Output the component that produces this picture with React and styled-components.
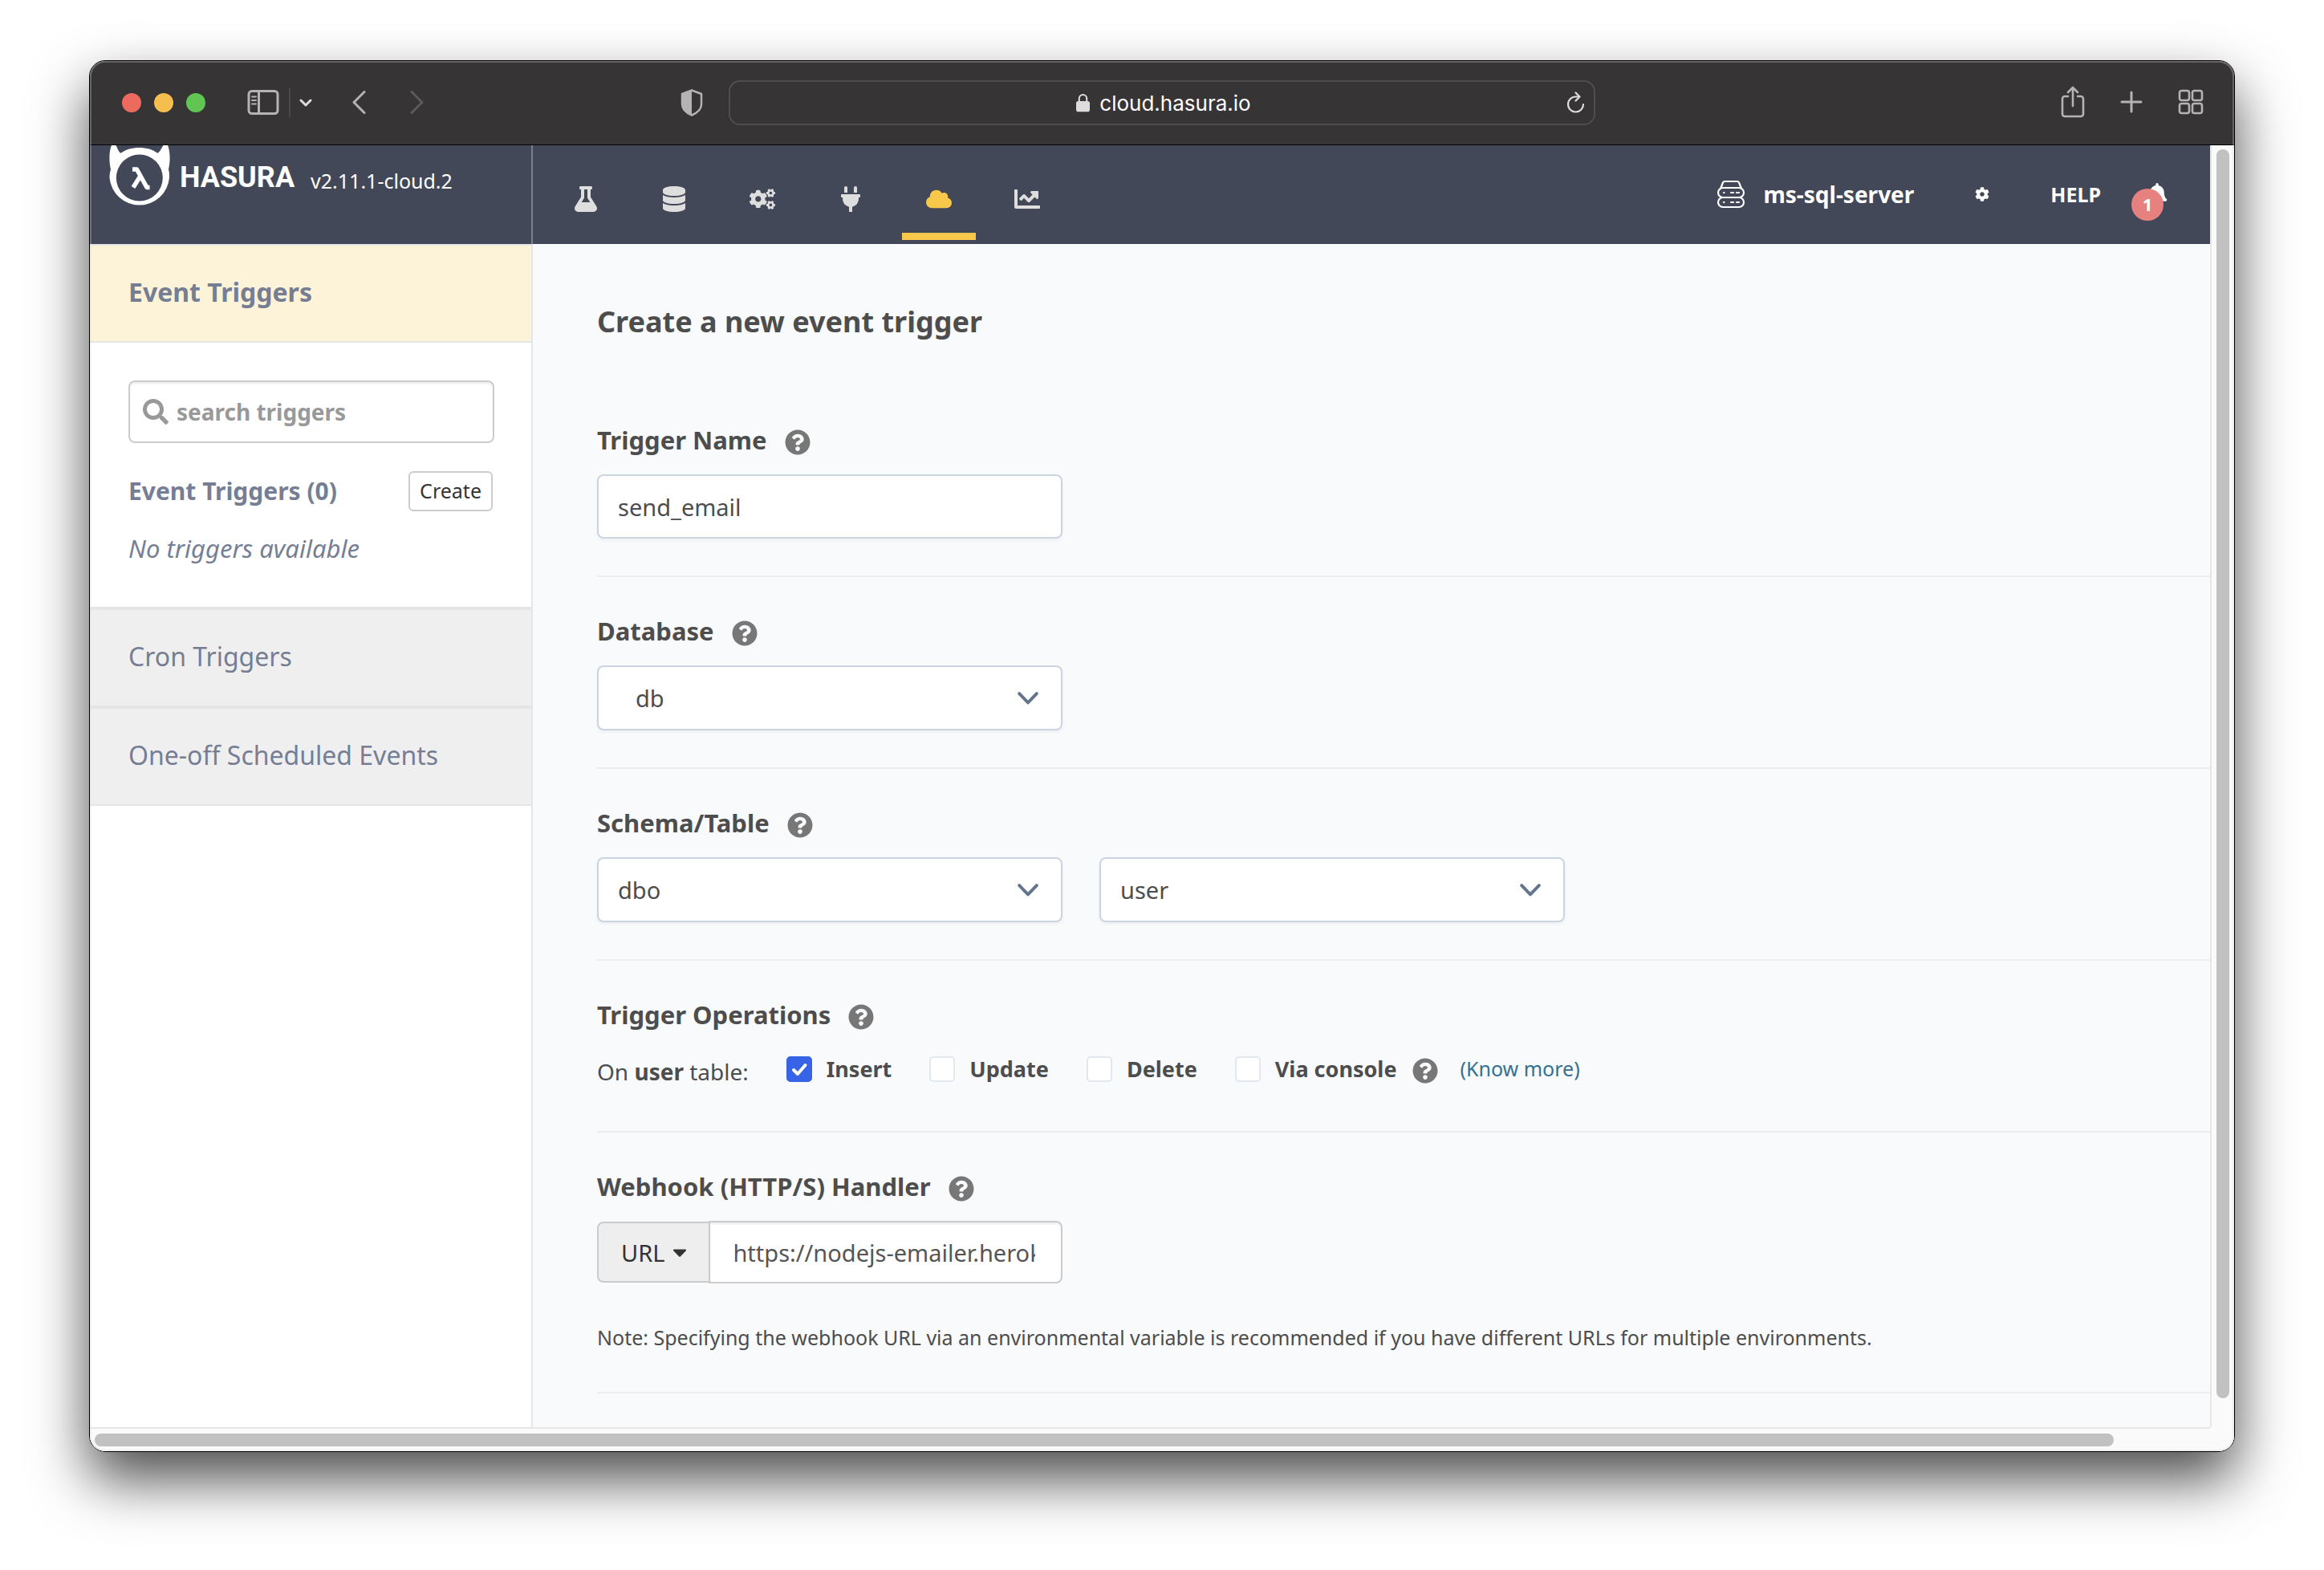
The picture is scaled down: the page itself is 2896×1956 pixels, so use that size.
import { useState } from "react";
import styled, { createGlobalStyle } from "styled-components";
import {
  FaFlask, FaDatabase, FaCogs, FaPlug, FaCloud, FaChartLine,
  FaCog, FaBell, FaSearch, FaQuestionCircle, FaCaretDown,
} from "react-icons/fa";

const navItems = [
  { name: "API", icon: FaFlask },
  { name: "Data", icon: FaDatabase },
  { name: "Actions", icon: FaCogs },
  { name: "Remote Schemas", icon: FaPlug },
  { name: "Events", icon: FaCloud, active: true },
  { name: "Monitoring", icon: FaChartLine },
];

const operationNames = ["Insert", "Update", "Delete", "Via console"];

function HelpIcon() {
  return (
    <Help type="button" aria-label="Help">
      <FaQuestionCircle size={32} />
    </Help>
  );
}

function Dropdown({ id, label, options, indent }) {
  return (
    <SelectBox>
      <Select id={id} aria-label={label} $indent={indent}>
        {options.map((o) => <option key={o}>{o}</option>)}
      </Select>
      <Chevron viewBox="0 0 24 24" fill="none" stroke="#64748b" strokeWidth="3.600" strokeLinecap="round" strokeLinejoin="round">
        <path d="M2 6.500 L12 17 L22 6.500" />
      </Chevron>
    </SelectBox>
  );
}

function TitleBar() {
  return (
    <Bar>
      <BarLeft>
        <Lights>
          <Light $color="#ed6a5e" aria-label="Close" />
          <Light $color="#f5bf4f" aria-label="Minimize" />
          <Light $color="#61c554" aria-label="Zoom" />
        </Lights>
        <BarButton aria-label="Sidebar">
          <svg width="40" height="32" viewBox="0 0 40 32" fill="none" stroke="#b5b3b4" strokeWidth="3">
            <rect x="2" y="1.500" width="36" height="28" rx="4" />
            <path d="M14.500 2V29" />
            <path d="M6 8.500h5M6 13h5M6 17.500h5" strokeWidth="2" strokeLinecap="round" />
          </svg>
        </BarButton>
        <BarDivider />
        <BarButton aria-label="Tab groups">
          <svg width="16" height="12" viewBox="0 0 16 12" fill="none" stroke="#dedddd" strokeWidth="3" strokeLinecap="round" strokeLinejoin="round">
            <path d="M2 3l6 6 6-6" />
          </svg>
        </BarButton>
        <Arrows>
          <BarButton aria-label="Back">
            <svg width="18" height="30" viewBox="0 0 18 30" fill="none" stroke="#b5b3b4" strokeWidth="3" strokeLinecap="round" strokeLinejoin="round">
              <path d="M15 1.500L2 14.500l13 13" />
            </svg>
          </BarButton>
          <BarButton aria-label="Forward">
            <svg width="18" height="30" viewBox="0 0 18 30" fill="none" stroke="#5c5a5b" strokeWidth="3" strokeLinecap="round" strokeLinejoin="round">
              <path d="M2 1.500l13 13-13 13" />
            </svg>
          </BarButton>
        </Arrows>
        <ShieldButton aria-label="Privacy report">
          <svg width="28" height="34" viewBox="0 0 28 34">
            <path d="M14 1.500L26 6v13c0 6-5 10.500-12 13.500C7 29.500 2 25 2 19V6z" fill="none" stroke="#b5b3b4" strokeWidth="2.500" strokeLinejoin="round" />
            <path d="M14 1.500V32.500C7 29.500 2 25 2 19V6z" fill="#b5b3b4" />
          </svg>
        </ShieldButton>
      </BarLeft>
      <Address>
        <span />
        <AddressText>
          <svg width="17" height="24" viewBox="0 0 18 24">
            <rect x="0" y="10" width="18" height="14" rx="3" fill="#dedddd" />
            <path d="M4 11V6.500a5 5 0 0 1 10 0V11" fill="none" stroke="#dedddd" strokeWidth="2.200" />
          </svg>
          cloud.hasura.io
        </AddressText>
        <BarButton aria-label="Reload">
          <svg width="24" height="28" viewBox="0 0 24 28" fill="none" stroke="#dedddd" strokeWidth="2.200" strokeLinecap="round" strokeLinejoin="round">
            <path d="M21 16a9.500 9.500 0 1 1-9.500-9.500h4" />
            <path d="M11.500 1.500l5 5-5 5" />
          </svg>
        </BarButton>
      </Address>
      <BarRight>
        <BarButton aria-label="Share">
          <svg width="30" height="40" viewBox="0 0 30 40" fill="none" stroke="#b5b3b4" strokeWidth="2.600" strokeLinecap="round" strokeLinejoin="round">
            <path d="M9 13H5a3 3 0 0 0-3 3v19a3 3 0 0 0 3 3h20a3 3 0 0 0 3-3V16a3 3 0 0 0-3-3h-4" />
            <path d="M15 25V2M9 8l6-6 6 6" />
          </svg>
        </BarButton>
        <BarButton aria-label="New tab">
          <svg width="28" height="28" viewBox="0 0 28 28" fill="none" stroke="#b5b3b4" strokeWidth="3" strokeLinecap="round">
            <path d="M14 2v24M2 14h24" />
          </svg>
        </BarButton>
        <BarButton aria-label="Tab overview">
          <svg width="32" height="32" viewBox="0 0 32 32" fill="none" stroke="#b5b3b4" strokeWidth="2.600">
            <rect x="2" y="2" width="12" height="12" rx="2.500" />
            <rect x="18" y="2" width="12" height="12" rx="2.500" />
            <rect x="2" y="18" width="12" height="12" rx="2.500" />
            <rect x="18" y="18" width="12" height="12" rx="2.500" />
          </svg>
        </BarButton>
      </BarRight>
    </Bar>
  );
}

function Header() {
  return (
    <Top>
      <Brand>
        <svg width="76" height="78" viewBox="0 0 76 78">
          <path
            fill="#fff"
            d="M3 0H8.500C10.500 4 12 8.500 14.500 9.800C21 5 29 3 37.500 3C46 3 54 5 60.500 9.800C63 8.500 65 4 67.500 0H73C76 7 76.500 20 74 30C75 33 75 37 75 40.500A37.400 37.400 0 0 1 .500 40.500C.500 37 1 33 2 30C-.500 20 0 7 3 0Z"
          />
          <circle cx="37.800" cy="40.500" r="29" fill="#434858" />
          <path
            fill="none"
            stroke="#fff"
            strokeWidth="5.500"
            strokeLinejoin="round"
            d="M29 30h5.500L47 52.500h3.500M38.500 39L30 52.500"
          />
        </svg>
        <BrandName>HASURA</BrandName>
        <Version>v2.11.1-cloud.2</Version>
      </Brand>
      <Nav>
        {navItems.map(({ name, icon: Icon, active }) => (
          <NavLink key={name} href="#" aria-label={name} $active={active}>
            <Icon size={32} />
          </NavLink>
        ))}
      </Nav>
      <Tools>
        <Project href="#">
          <svg width="36" height="36" viewBox="0 0 36 36" fill="none" stroke="#fff" strokeWidth="2.200" strokeLinejoin="round" strokeLinecap="round">
            <rect x="2" y="10" width="32" height="12" rx="6" />
            <rect x="2" y="22" width="32" height="12" rx="6" />
            <path d="M5 11l3-7.500c.500-1 1-1.500 2-1.500h16c1 0 1.500.500 2 1.500L31 11" />
            <path d="M9 16h.500M18 16h3M25 16h3M9 28h.500M18 28h3M25 28h3" />
          </svg>
          ms-sql-server
        </Project>
        <IconButton aria-label="Settings"><FaCog size={18} /></IconButton>
        <HelpLink href="#">HELP</HelpLink>
        <BellButton aria-label="Notifications">
          <FaBell size={28} />
          <Badge>1</Badge>
        </BellButton>
      </Tools>
    </Top>
  );
}

export default function App() {
  const [checked, setChecked] = useState({ Insert: true });
  const [triggerName, setTriggerName] = useState("send_email");
  const [url, setUrl] = useState("https://nodejs-emailer.herokuapp.com");

  const toggle = (name) => setChecked((prev) => ({ ...prev, [name]: !prev[name] }));

  return (
    <Desktop>
      <GlobalStyle />
      <Window>
        <TitleBar />
        <Viewport>
          <Page>
            <Header />
            <Body>
              <Sidebar>
                <SideItem href="#" $active>Event Triggers</SideItem>
                <SideBody>
                  <SearchBox>
                    <FaSearch size={32} />
                    <input type="text" aria-label="search triggers" placeholder="search triggers" />
                  </SearchBox>
                  <SideRow>
                    <SideCount>Event Triggers (0)</SideCount>
                    <CreateButton>Create</CreateButton>
                  </SideRow>
                  <Empty>No triggers available</Empty>
                </SideBody>
                <SideItem href="#">Cron Triggers</SideItem>
                <SideItem href="#">One-off Scheduled Events</SideItem>
              </Sidebar>

              <Main>
                <Title>Create a new event trigger</Title>

                <Section>
                  <Heading><label htmlFor="name">Trigger Name</label><HelpIcon /></Heading>
                  <TextInput id="name" value={triggerName} onChange={(e) => setTriggerName(e.target.value)} />
                </Section>

                <Section>
                  <Heading><label htmlFor="db">Database</label><HelpIcon /></Heading>
                  <Dropdown id="db" label="Database" options={["db"]} indent />
                </Section>

                <Section>
                  <Heading><label htmlFor="schema">Schema/Table</label><HelpIcon /></Heading>
                  <Fields>
                    <Dropdown id="schema" label="Schema" options={["dbo"]} />
                    <Dropdown id="table" label="Table" options={["user"]} />
                  </Fields>
                </Section>

                <Section>
                  <Heading>Trigger Operations<HelpIcon /></Heading>
                  <Operations>
                    <span>On <b>user</b> table:</span>
                    {operationNames.map((name) => (
                      <Check key={name}>
                        <Tick>
                          <input type="checkbox" checked={!!checked[name]} onChange={() => toggle(name)} />
                          <svg viewBox="0 0 32 32" fill="none" stroke="#fff" strokeWidth="4" strokeLinecap="round" strokeLinejoin="round">
                            <path d="M9 17l5 5 9.500-11" />
                          </svg>
                        </Tick>
                        {name}
                      </Check>
                    ))}
                    <Extra>
                      <HelpIcon />
                      <KnowMore href="#">(Know more)</KnowMore>
                    </Extra>
                  </Operations>
                </Section>

                <Section>
                  <Heading><label htmlFor="url">Webhook (HTTP/S) Handler</label><HelpIcon /></Heading>
                  <UrlGroup>
                    <UrlButton>URL <FaCaretDown size={28} /></UrlButton>
                    <UrlInput id="url" value={url} onChange={(e) => setUrl(e.target.value)} />
                  </UrlGroup>
                  <Note>
                    Note: Specifying the webhook URL via an environmental variable is recommended if you have different URLs for multiple environments.
                  </Note>
                </Section>
              </Main>
            </Body>
          </Page>
          <TrackY><ThumbY /></TrackY>
          <TrackX><ThumbX /></TrackX>
        </Viewport>
      </Window>
    </Desktop>
  );
}

const GlobalStyle = createGlobalStyle`
  * { box-sizing: border-box; }
  body {
    margin: 0;
    background: #fff;
    color: #4d4d4d;
    font-family: "Noto Sans", "Open Sans", sans-serif;
    font-size: 28px;
  }
  button, input, select { font: inherit; color: inherit; }
  button { cursor: pointer; }
  a { text-decoration: none; }
  svg { display: block; flex: none; }
`;

const Desktop = styled.div`
  display: flex;
  height: 100vh;
  padding: 75px 111px 147px;
`;

const Window = styled.div`
  position: relative;
  display: flex;
  flex-direction: column;
  flex: 1;
  min-width: 0;
  overflow: hidden;
  border: 1px solid #000;
  border-radius: 20px;
  box-shadow: 0 34px 70px rgba(0, 0, 0, 0.7);

  &::after {
    content: "";
    position: absolute;
    inset: 0;
    border-radius: 19px;
    box-shadow: inset 0 0 0 2px rgba(215, 215, 215, 0.3);
    pointer-events: none;
  }
`;

/* browser bar */

const Bar = styled.div`
  display: grid;
  grid-template-columns: 1fr minmax(0, 1080px) 1fr;
  align-items: center;
  height: 105px;
  border-bottom: 1px solid #000;
  background: #373435;
`;

const BarLeft = styled.div`
  display: flex;
  align-items: center;
  padding: 0 32px 0 40px;
`;

const Lights = styled.div`
  display: flex;
  gap: 16px;
  margin-right: 52px;
`;

const Light = styled.button`
  width: 24px;
  height: 24px;
  padding: 0;
  border: none;
  border-radius: 50%;
  background: ${(p) => p.$color};
`;

const BarButton = styled.button`
  padding: 0;
  border: none;
  background: none;
`;

const BarDivider = styled.div`
  width: 2px;
  height: 36px;
  margin: 0 11px 0 12px;
  background: #4b494a;
`;

const Arrows = styled.div`
  display: flex;
  gap: 54px;
  margin-left: 50px;
`;

const ShieldButton = styled(BarButton)`
  margin-left: auto;
`;

const Address = styled.div`
  display: grid;
  grid-template-columns: 1fr auto 1fr;
  align-items: center;
  height: 56px;
  padding: 0 10px;
  border: 2px solid #4f4d4e;
  border-radius: 14px;

  ${BarButton} {
    justify-self: end;
  }
`;

const AddressText = styled.div`
  display: flex;
  align-items: center;
  gap: 12px;
  padding-left: 4px;
  color: #fff;
  font-family: Inter, Roboto, sans-serif;
  font-size: 26px;
`;

const BarRight = styled.div`
  display: flex;
  align-items: center;
  justify-content: flex-end;
  gap: 44px;
  padding: 0 38px 2px 0;
`;

/* page area with its scrollbars */

const Viewport = styled.div`
  display: grid;
  grid-template-columns: minmax(0, 1fr) 30px;
  grid-template-rows: minmax(0, 1fr) 30px;
  flex: 1;
  min-height: 0;
  background: #fafafa;
`;

const Page = styled.div`
  display: flex;
  flex-direction: column;
  overflow: hidden;
`;

const TrackY = styled.div`
  padding: 5px 6px 36px;
  border-left: 2px solid #e6e6e6;
`;

const ThumbY = styled.div`
  width: 16px;
  height: 100%;
  border-radius: 8px;
  background: #c1c1c1;
`;

const TrackX = styled.div`
  padding: 6px 120px 6px 6px;
  border-top: 2px solid #e6e6e6;
`;

const ThumbX = styled.div`
  height: 16px;
  border-radius: 8px;
  background: #c1c1c1;
`;

/* console header */

const Top = styled.header`
  display: flex;
  flex: none;
  height: 123px;
  background: #434858;
  color: #fff;
`;

const Brand = styled.div`
  display: flex;
  align-items: flex-start;
  width: 552px;
  padding-left: 24px;
  border-right: 2px solid #787f90;
`;

const BrandName = styled.div`
  margin: 18px 0 0 12px;
  font-family: Roboto, "Liberation Sans", sans-serif;
  font-size: 36px;
  font-weight: 700;
  line-height: 44px;
`;

const Version = styled.div`
  margin: 26px 0 0 20px;
  font-size: 25px;
  line-height: 36px;
`;

const Nav = styled.nav`
  display: flex;
  gap: 18px;
  padding: 24px 0 5px 20px;
`;

const NavLink = styled.a`
  display: flex;
  align-items: center;
  justify-content: center;
  width: 92px;
  border-bottom: 9px solid ${(p) => (p.$active ? "#f8c84b" : "transparent")};
  color: ${(p) => (p.$active ? "#f8c84b" : "#dedede")};
`;

const Tools = styled.div`
  display: flex;
  align-items: center;
  margin-left: auto;
  padding: 0 52px 2px 0;
`;

const Project = styled.a`
  display: flex;
  align-items: center;
  gap: 22px;
  color: #fff;
  font-weight: 700;
`;

const IconButton = styled.button`
  padding: 0;
  margin: 0 76px;
  border: none;
  background: none;
  color: #fff;
`;

const HelpLink = styled.a`
  color: #fff;
  font-size: 25px;
  font-weight: 700;
`;

const BellButton = styled.button`
  position: relative;
  margin-left: 56px;
  padding: 0;
  border: none;
  background: none;
  color: #fff;
`;

const Badge = styled.span`
  position: absolute;
  top: 7px;
  right: 6px;
  width: 40px;
  height: 40px;
  border-radius: 50%;
  background: #e6817f;
  font-size: 22px;
  font-weight: 700;
  line-height: 38px;
  text-align: center;
`;

/* sidebar */

const Body = styled.div`
  display: flex;
  flex: 1;
  min-height: 0;
`;

const Sidebar = styled.aside`
  flex: none;
  width: 552px;
  border-right: 2px solid #e5e5e5;
  background: #fff;
`;

const SideItem = styled.a`
  display: block;
  padding: 34px 48px 38px;
  border: solid #e5e5e5;
  border-width: 2px 0;
  background: ${(p) => (p.$active ? "#fdf3d9" : "#efefef")};
  color: #767e93;
  font-size: 32px;
  font-weight: ${(p) => (p.$active ? 700 : 400)};
  line-height: 47px;
`;

const SideBody = styled.div`
  padding: 47px 46px 47px 48px;
  border-bottom: 2px solid #e5e5e5;
`;

const SearchBox = styled.div`
  display: flex;
  align-items: center;
  gap: 10px;
  height: 78px;
  padding: 0 16px;
  border: 2px solid #ccc;
  border-radius: 8px;
  box-shadow: inset 0 2px 2px rgba(0, 0, 0, 0.075);
  color: #999;
  font-weight: 700;

  input {
    flex: 1;
    min-width: 0;
    padding: 0;
    border: none;
    outline: none;
    background: none;
  }
  input::placeholder {
    color: #999;
    opacity: 1;
  }
`;

const SideRow = styled.div`
  display: flex;
  align-items: center;
  justify-content: space-between;
  margin: 35px 2px 0 0;
`;

const SideCount = styled.div`
  color: #767e93;
  font-size: 30px;
  font-weight: 700;
  line-height: 40px;
`;

const CreateButton = styled.button`
  height: 50px;
  padding: 0 12px 2px;
  border: 2px solid #ccc;
  border-radius: 6px;
  background: #fff;
  color: #333;
  font-size: 25px;
  line-height: 40px;
`;

const Empty = styled.div`
  margin: 23px 0 2px;
  color: #767e93;
  font-size: 31px;
  font-style: italic;
  line-height: 47px;
`;

/* form */

const Main = styled.main`
  flex: 1;
  min-width: 0;
  padding-left: 80px;
  overflow: hidden;
  background: #f8fafc;
`;

const Title = styled.h2`
  margin: 72px 0 55px;
  font-size: 36px;
  font-weight: 700;
  line-height: 50px;
`;

const Section = styled.section`
  padding: 46px 0;
  border-bottom: 2px solid #ebedef;
`;

const Heading = styled.div`
  display: flex;
  align-items: center;
  gap: 22px;
  height: 42px;
  margin-bottom: 22px;
  font-size: 31px;
  font-weight: 700;
`;

const Help = styled.button`
  padding: 6px 0 0;
  border: none;
  background: none;
  color: #777;
`;

const Fields = styled.div`
  display: flex;
  gap: 46px;
`;

const TextInput = styled.input`
  display: block;
  width: 100%;
  max-width: 580px;
  height: 80px;
  padding: 0 24px;
  border: 2px solid #cbd5e1;
  border-radius: 8px;
  box-shadow: 0 2px 4px rgba(0, 0, 0, 0.05);
  background: #fff;
  outline: none;
  font-size: 29px;
`;

const SelectBox = styled.div`
  position: relative;
  width: 100%;
  max-width: 580px;
`;

const Select = styled.select`
  appearance: none;
  display: block;
  width: 100%;
  height: 81px;
  padding: 0 80px 0 ${(p) => (p.$indent ? 46 : 24)}px;
  border: 2px solid #cbd5e1;
  border-radius: 8px;
  box-shadow: 0 2px 4px rgba(0, 0, 0, 0.05);
  background: #fff;
  font-size: 29px;
`;

const Chevron = styled.svg`
  position: absolute;
  top: 28px;
  right: 30px;
  width: 26px;
  height: 26px;
  pointer-events: none;
`;

const Operations = styled.div`
  display: flex;
  align-items: center;
  gap: 47px;
  height: 56px;
  font-size: 28px;
`;

const Check = styled.label`
  display: flex;
  align-items: center;
  gap: 18px;
  margin-bottom: 7px;
  font-size: 27px;
  font-weight: 700;
`;

const Tick = styled.span`
  display: grid;

  input, svg {
    grid-area: 1 / 1;
    width: 32px;
    height: 32px;
    margin: 0;
  }
  input {
    appearance: none;
    border: 2px solid #e2e8f0;
    border-radius: 5px;
    background: #fff;
  }
  input:checked {
    border-color: #3763e6;
    background: #3763e6;
  }
  svg {
    pointer-events: none;
  }
  input:not(:checked) + svg {
    visibility: hidden;
  }
`;

const Extra = styled.div`
  display: flex;
  align-items: center;
  gap: 28px;
  margin: 0 0 8px -28px;
`;

const KnowMore = styled.a`
  color: #337194;
  font-size: 25px;
`;

const UrlGroup = styled.div`
  display: flex;
  align-items: center;
  max-width: 580px;
`;

const UrlButton = styled.button`
  display: flex;
  align-items: center;
  gap: 5px;
  height: 76px;
  padding: 0 22px 0 28px;
  border: 2px solid #ccc;
  border-right: none;
  border-radius: 8px 0 0 8px;
  background: #eee;
  color: #333;
  font-size: 29px;
`;

const UrlInput = styled.input`
  flex: 1;
  min-width: 0;
  height: 78px;
  padding: 0 32px 0 28px;
  border: 2px solid #ccc;
  border-radius: 0 8px 8px 0;
  box-shadow: inset 0 2px 2px rgba(0, 0, 0, 0.075);
  background: #fff;
  outline: none;
  color: #555;
  font-size: 29px;
`;

const Note = styled.p`
  margin: 47px 0 2px;
  font-size: 25px;
  line-height: 40px;
`;
